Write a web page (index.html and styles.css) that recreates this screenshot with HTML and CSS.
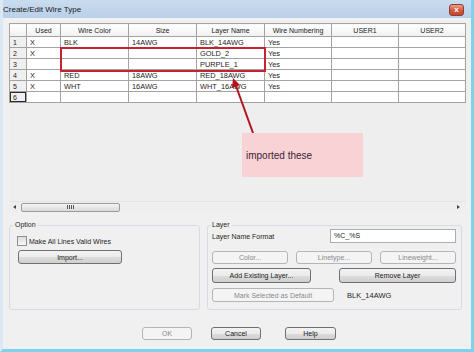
FILE: index.html
```html
<html>
<head lang="en">
<meta charset="UTF-8">
<link rel="stylesheet" href="styles.css">
</head>
<body>

<div class="window">
  <div class="titlebar">
    <span class="title">Create/Edit Wire Type</span>
    <span class="close_btn">x</span>
  </div>

  <div class="client">
    <div class="grid_box">
      <table class="wire_grid">
        <colgroup>
          <col style="width: 17px;"><col style="width: 34px;"><col style="width: 68px;"><col style="width: 68px;">
          <col style="width: 68px;"><col style="width: 67px;"><col style="width: 67px;"><col style="width: 67px;">
        </colgroup>
        <tr class="head">
          <th class="corner"></th>
          <th>Used</th>
          <th>Wire Color</th>
          <th>Size</th>
          <th>Layer Name</th>
          <th>Wire Numbering</th>
          <th>USER1</th>
          <th>USER2</th>
        </tr>
        <tr><th class="rownum">1</th><td>X</td><td>BLK</td><td>14AWG</td><td>BLK_14AWG</td><td>Yes</td><td></td><td></td></tr>
        <tr><th class="rownum">2</th><td>X</td><td></td><td></td><td>GOLD_2</td><td>Yes</td><td></td><td></td></tr>
        <tr><th class="rownum">3</th><td></td><td></td><td></td><td>PURPLE_1</td><td>Yes</td><td></td><td></td></tr>
        <tr><th class="rownum">4</th><td>X</td><td>RED</td><td>18AWG</td><td>RED_18AWG</td><td>Yes</td><td></td><td></td></tr>
        <tr><th class="rownum">5</th><td>X</td><td>WHT</td><td>16AWG</td><td>WHT_16AWG</td><td>Yes</td><td></td><td></td></tr>
        <tr><th class="rownum current">6</th><td></td><td></td><td></td><td></td><td></td><td></td><td></td></tr>
      </table>
      <div class="grid_empty"></div>
      <div class="hscroll">
        <span class="arrow_left"></span>
        <span class="thumb"><span class="gripper"></span></span>
        <span class="track"></span>
        <span class="arrow_right"></span>
      </div>
      <!-- red marker drawn over the imported rows -->
      <div class="highlight"></div>
    </div>

    <div class="groups">
      <fieldset class="group option_group">
        <legend>Option</legend>
        <div class="group_inner">
          <label class="check_row"><span class="checkbox"></span>Make All Lines Valid Wires</label>
          <button class="btn import_btn">Import...</button>
        </div>
      </fieldset>

      <fieldset class="group layer_group">
        <legend>Layer</legend>
        <div class="group_inner">
          <div class="format_row">
            <span class="format_label">Layer Name Format</span>
            <span class="text_input">%C_%S</span>
          </div>
          <div class="style_row">
            <button class="btn" disabled>Color...</button>
            <button class="btn" disabled>Linetype...</button>
            <button class="btn" disabled>Lineweight...</button>
          </div>
          <div class="layer_row">
            <button class="btn add_btn">Add Existing Layer...</button>
            <button class="btn remove_btn">Remove Layer</button>
          </div>
          <div class="default_row">
            <button class="btn mark_btn" disabled>Mark Selected as Default</button>
            <span class="default_name">BLK_14AWG</span>
          </div>
        </div>
      </fieldset>
    </div>

    <div class="dialog_buttons">
      <button class="btn ok_btn" disabled>OK</button>
      <button class="btn cancel_btn">Cancel</button>
      <button class="btn help_btn">Help</button>
    </div>
  </div>
</div>

<svg class="callout_arrow" width="474" height="352" viewBox="0 0 474 352">
  <line x1="253" y1="133" x2="236" y2="86" stroke="#b3121f" stroke-width="2"/>
  <polygon points="233,78 240,85 232,88" fill="#b3121f"/>
</svg>
<div class="callout">imported these</div>

</body>
</html>
```

FILE: styles.css
```css
body {
  margin: 0;
  font-family: "Liberation Sans", Arial, sans-serif;
  font-size: 7px;
  color: #1e1e1e;
  position: relative;
  width: 474px;
  height: 352px;
  overflow: hidden;
  background: #f0f0f0;
}

/* buttons */

.btn {
  box-sizing: border-box;
  margin: 0;
  padding: 0;
  font-family: "Liberation Sans", Arial, sans-serif;
  font-size: 7px;
  color: #1a1a1a;
  border: 1px solid #707070;
  border-radius: 3px;
  background: linear-gradient(#f3f3f3, #ebebeb 50%, #dddddd 51%, #cfcfcf);
}

.btn:disabled {
  color: #8a8a8a;
  border-color: #b2b6b9;
  background: #f4f4f4;
}

.window {
  box-sizing: border-box;
  width: 474px;
  height: 352px;
  display: flex;
  flex-direction: column;
  background: #f0f0f0;
  border-left: 3px solid #dce8f5;
  border-right: 3px solid #7bd4e9;
  border-bottom: 3px solid #7bd4e9;
}

.titlebar {
  height: 18px;
  display: flex;
  align-items: center;
  justify-content: space-between;
  padding: 1px 7px 0 0;
  box-sizing: border-box;
  background: linear-gradient(#cadcef, #b9d0e9);
}

.title {
  font-size: 8px;
  color: #1a1a1a;
}

.close_btn {
  box-sizing: border-box;
  width: 15px;
  height: 12px;
  border: 1px solid #8d3e2e;
  border-radius: 3px;
  background: linear-gradient(#eaa28f, #d35d41 50%, #c3432b);
  color: #fff;
  font-size: 8px;
  font-weight: bold;
  line-height: 9px;
  text-align: center;
}

.client {
  flex: 1;
  padding: 5px 5px 0 6px;
}

/* grid */

.grid_box {
  position: relative;
  height: 190px;
  display: flex;
  flex-direction: column;
  background: #eeeeee;
}

.wire_grid {
  border-collapse: collapse;
  table-layout: fixed;
  width: 456px;
  background: #fff;
  font-family: "Liberation Sans", Arial, sans-serif;
  font-size: 7px;
}

.wire_grid th, .wire_grid td {
  border: 1px solid #a3a3a3;
  padding: 0 3px;
  white-space: nowrap;
  overflow: hidden;
  font-size: 7px;
  line-height: 9px;
  height: 11px;
}

.wire_grid td {
  font-size: 7.4px;
}

.wire_grid .head th {
  height: 13px;
}

.head th {
  font-weight: normal;
  text-align: center;
  background: linear-gradient(#ffffff, #f0f0f0);
  color: #222;
}

.rownum {
  font-weight: normal;
  text-align: left;
  background: #f0f0f0;
}

.rownum.current {
  box-shadow: inset 0 0 0 1px #2a2a2a;
}

.grid_empty {
  flex: 1;
}

.hscroll {
  height: 10px;
  margin-bottom: 1px;
  display: flex;
  align-items: center;
  border-top: 1px solid #e3e3e3;
}

.arrow_left {
  width: 0;
  height: 0;
  margin-left: 4px;
  border-top: 2px solid transparent;
  border-bottom: 2px solid transparent;
  border-right: 3px solid #444;
}

.arrow_right {
  width: 0;
  height: 0;
  margin-right: 6px;
  border-top: 2px solid transparent;
  border-bottom: 2px solid transparent;
  border-left: 3px solid #444;
}

.thumb {
  box-sizing: border-box;
  width: 99px;
  height: 9px;
  margin-left: 5px;
  border: 1px solid #9c9c9c;
  border-radius: 2px;
  background: linear-gradient(#f4f4f4, #dadada);
  display: flex;
  align-items: center;
  justify-content: center;
}

.gripper {
  width: 7px;
  height: 4px;
  background: repeating-linear-gradient(90deg, #555 0 1px, transparent 1px 2px);
}

.track {
  flex: 1;
}

.highlight {
  position: absolute;
  left: 51px;
  top: 24px;
  width: 206px;
  height: 25px;
  box-sizing: border-box;
  border: 2px solid #c4242f;
}

/* group boxes */

.groups {
  display: flex;
  gap: 7px;
  margin-top: 8px;
}

.group {
  box-sizing: border-box;
  height: 89px;
  margin: 0;
  padding: 0;
  border: 1px solid #d6dce2;
  border-radius: 3px;
  min-width: 0;
}

.group legend {
  padding: 0 2px;
  line-height: 8px;
  font-size: 7px;
}

.option_group {
  width: 191px;
}

.option_group legend {
  margin-left: 3px;
}

.layer_group {
  width: 255px;
}

.layer_group legend {
  margin-left: 2px;
}

.option_group .group_inner {
  padding: 7px 0 0 7px;
}

.check_row {
  display: flex;
  align-items: center;
  height: 10px;
}

.checkbox {
  box-sizing: border-box;
  width: 10px;
  height: 10px;
  margin-right: 2px;
  border: 1px solid #8e8f8f;
  background: linear-gradient(#dcdcdc, #f8f8f8);
}

.import_btn {
  display: block;
  width: 104px;
  height: 14px;
  margin: 4px 0 0 1px;
}

.layer_group .group_inner {
  padding: 0 5px 0 4px;
}

.format_row {
  display: flex;
  align-items: center;
  height: 14px;
}

.format_label {
  width: 118px;
}

.text_input {
  flex: 1;
  box-sizing: border-box;
  height: 14px;
  border: 1px solid #abadb3;
  background: #fff;
  padding-left: 3px;
  line-height: 11px;
}

.style_row {
  display: grid;
  grid-template-columns: repeat(3, 1fr);
  gap: 8px;
  margin-top: 8px;
}

.style_row .btn {
  height: 13px;
}

.layer_row {
  display: flex;
  justify-content: space-between;
  margin-top: 4px;
}

.add_btn {
  width: 99px;
  height: 15px;
}

.remove_btn {
  width: 117px;
  height: 15px;
}

.default_row {
  display: flex;
  align-items: center;
  margin-top: 5px;
}

.mark_btn {
  width: 122px;
  height: 14px;
}

.default_name {
  margin-left: 13px;
  font-size: 7.5px;
}

.dialog_buttons {
  display: flex;
  margin-top: 17px;
  padding-left: 133px;
}

.dialog_buttons .btn {
  height: 13px;
}

.ok_btn {
  width: 50px;
}

.cancel_btn {
  width: 50px;
  margin-left: 19px;
}

.help_btn {
  width: 51px;
  margin-left: 24px;
}

/* annotation */

.callout_arrow {
  position: absolute;
  left: 0;
  top: 0;
  pointer-events: none;
}

.callout {
  position: absolute;
  left: 242px;
  top: 133px;
  width: 121px;
  height: 44px;
  box-sizing: border-box;
  padding-left: 4px;
  display: flex;
  align-items: center;
  background: #f8d2d4;
  color: #3d2437;
  font-size: 10px;
}
```
